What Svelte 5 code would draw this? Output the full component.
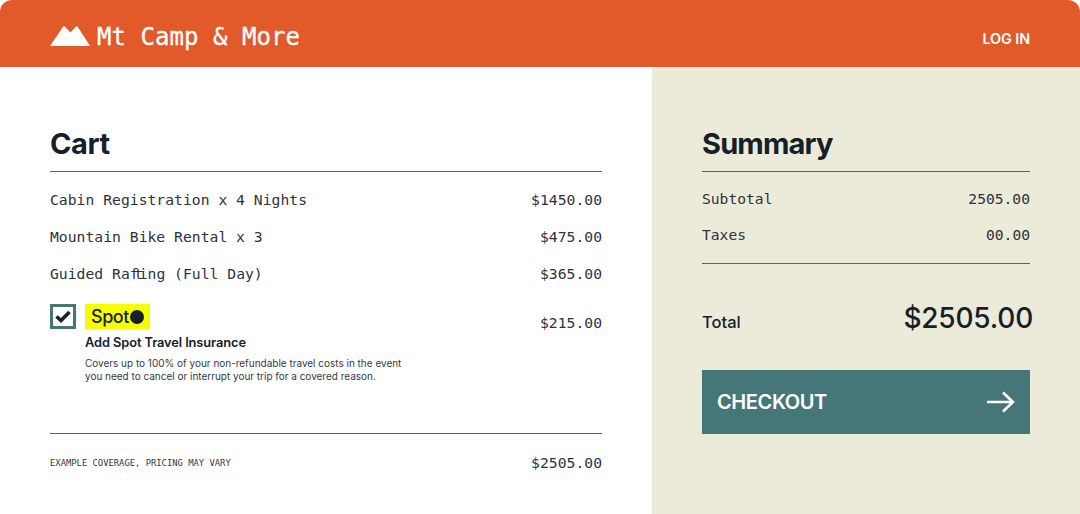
<script>
  const items = [
    { name: "Cabin Registration x 4 Nights", price: "$1450.00" },
    { name: "Mountain Bike Rental x 3", price: "$475.00" },
    { name: "Guided Rafting (Full Day)", price: "$365.00" },
  ];
  const summary = [
    { name: "Subtotal", value: "2505.00" },
    { name: "Taxes", value: "00.00" },
  ];
</script>

<div class="page">
  <header class="topbar">
    <div class="brand">
      <svg class="mark" viewBox="0 0 40 20" width="40" height="20" aria-hidden="true">
        <path d="M0 20 L13.3 0.6 Q14 0 14.7 0.6 L20.5 6.5 L26 0.6 Q26.8 0 27.5 0.6 L40 20 Z" fill="#fff" />
      </svg>
      <span class="brand-name">Mt Camp &amp; More</span>
    </div>
    <span class="login">LOG IN</span>
  </header>

  <main class="content">
    <section class="cart">
      <h1>Cart</h1>
      <div class="rows">
        {#each items as item}
          {@const parts = item.name.split("ft")}
          <div class="row mono">
            <!-- the reference font draws "ft" as a one-cell ligature -->
            <span>{parts[0]}{#if parts.length > 1}<span class="lig">ft</span>{parts[1]}{/if}</span>
            <span>{item.price}</span>
          </div>
        {/each}
      </div>

      <div class="addon">
        <span class="checkbox">
          <svg viewBox="0 0 16 13" width="16" height="13" aria-hidden="true">
            <path d="M1.5 6.5 L6 10.5 L14.5 2" fill="none" stroke="#16202b" stroke-width="3.6" />
          </svg>
        </span>
        <div class="addon-body">
          <div class="spot"><span>Spot</span><i></i></div>
          <h2>Add Spot Travel Insurance</h2>
          <p>Covers up to 100% of your non-refundable travel costs in the event<br />you need to cancel or interrupt your trip for a covered reason.</p>
        </div>
        <span class="mono addon-price">$215.00</span>
      </div>

      <div class="cart-foot">
        <span class="note">EXAMPLE COVERAGE, PRICING MAY VARY</span>
        <span class="mono">$2505.00</span>
      </div>
    </section>

    <aside class="summary">
      <h1>Summary</h1>
      <div class="summary-rows">
        {#each summary as row}
          <div class="row mono small">
            <span>{row.name}</span>
            <span>{row.value}</span>
          </div>
        {/each}
      </div>
      <div class="total">
        <span class="total-label">Total</span>
        <span class="total-value">$2505.00</span>
      </div>
      <button class="checkout">
        <span>CHECKOUT</span>
        <svg viewBox="0 0 28 22" width="28" height="22" aria-hidden="true">
          <path d="M0 11 H26 M16 1.5 L26 11 L16 20.5" fill="none" stroke="#fff" stroke-width="2.6" />
        </svg>
      </button>
    </aside>
  </main>
</div>

<style>
  :global(body) {
    margin: 0;
    background: #fff;
  }

  .page {
    width: 1080px;
    height: 514px;
    overflow: hidden;
    font-family: Inter, "Noto Sans", sans-serif;
    color: #16202b;
  }

  .topbar {
    height: 67px;
    box-sizing: border-box;
    background: #e2592a;
    border-radius: 12px 12px 0 0;
    padding: 4px 50px 0;
    display: flex;
    align-items: center;
    justify-content: space-between;
    color: #fff;
  }

  .brand {
    display: flex;
    align-items: center;
    gap: 7px;
  }

  .mark {
    display: block;
  }

  .brand-name {
    font-family: "DejaVu Sans Mono", monospace;
    font-size: 24px;
    letter-spacing: 0.05px;
    line-height: 30px;
    margin-top: 3px;
    -webkit-text-stroke: 0.3px #fff;
  }

  .login {
    font-size: 14.4px;
    font-weight: 600;
    letter-spacing: -0.1px;
    margin-top: 6px;
  }

  .content {
    height: 447px;
    display: grid;
    grid-template-columns: 652px 428px;
  }

  .cart {
    padding: 58px 50px 0;
  }

  .summary {
    background: #ecebda;
    padding: 58px 50px 0;
  }

  h1 {
    margin: 0;
    font-size: 29px;
    line-height: 38px;
    font-weight: 700;
    letter-spacing: -0.4px;
    padding-bottom: 8px;
    border-bottom: 1px solid #5f5f5f;
  }

  .summary h1 {
    letter-spacing: -0.85px;
  }

  .row {
    display: flex;
    justify-content: space-between;
  }

  .mono {
    font-family: "DejaVu Sans Mono", monospace;
    font-size: 14.7px;
    letter-spacing: 0.02px;
    line-height: 20px;
    color: #2c333b;
  }

  .lig {
    letter-spacing: -4.4px;
  }

  .rows {
    padding-top: 18px;
    display: grid;
    gap: 17px;
  }

  .addon {
    margin-top: 20px;
    display: flex;
    align-items: flex-start;
    height: 129px;
    border-bottom: 1px solid #5f5f5f;
  }

  .checkbox {
    width: 26px;
    height: 25px;
    box-sizing: border-box;
    border: 3px solid #457678;
    display: flex;
    align-items: center;
    justify-content: center;
    margin-right: 9px;
    flex: none;
  }

  .addon-body {
    flex: 1;
  }

  .spot {
    width: 65px;
    height: 25px;
    box-sizing: border-box;
    background: #f6ff00;
    display: flex;
    align-items: center;
    padding-left: 6px;
    font-size: 18px;
    font-weight: 500;
    letter-spacing: -0.5px;
  }

  .spot i {
    width: 14px;
    height: 14px;
    border-radius: 50%;
    background: #16202b;
    margin-left: 1px;
  }

  h2 {
    margin: 5px 0 0;
    font-size: 12.85px;
    line-height: 18px;
    font-weight: 600;
    letter-spacing: -0.1px;
  }

  p {
    margin: 5px 0 0;
    font-size: 9.97px;
    line-height: 13px;
    color: #333a42;
  }

  .addon-price {
    margin-top: 9px;
  }

  .cart-foot {
    display: flex;
    justify-content: space-between;
    align-items: center;
    padding-top: 19px;
  }

  .note {
    font-family: "DejaVu Sans Mono", monospace;
    font-size: 8.84px;
    color: #333a42;
  }

  .summary-rows {
    padding: 17px 0 18px;
    display: grid;
    gap: 16px;
    border-bottom: 1px solid #5f5f5f;
  }

  .small {
    font-size: 14.6px;
  }

  .total {
    display: flex;
    justify-content: space-between;
    align-items: baseline;
    margin-top: 37px;
    margin-right: -3px;
  }

  .total-label {
    font-size: 16.5px;
    font-weight: 500;
  }

  .total-value {
    font-size: 28px;
    font-weight: 500;
    letter-spacing: -0.2px;
  }

  .checkout {
    margin-top: 35px;
    width: 100%;
    height: 64px;
    border: 0;
    background: #457678;
    color: #fff;
    padding: 0 15px;
    display: flex;
    align-items: center;
    justify-content: space-between;
    font-family: inherit;
    font-size: 20px;
    font-weight: 600;
    letter-spacing: -0.4px;
  }
</style>
